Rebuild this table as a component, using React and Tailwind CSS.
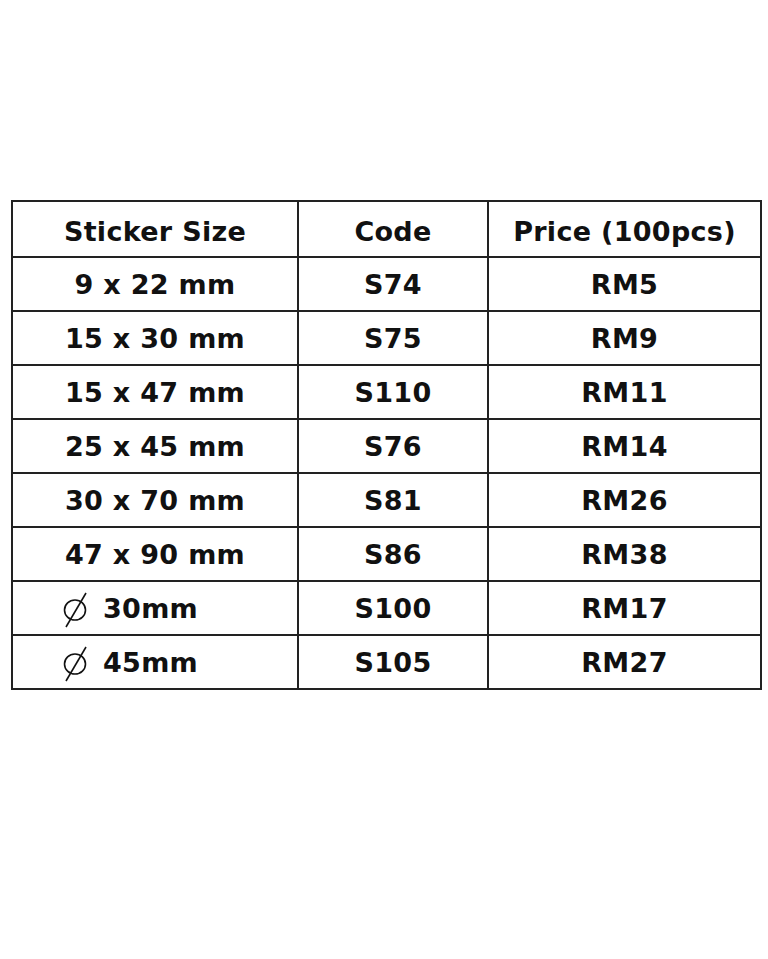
import React from "react";

const rows = [
  { size: "9 x 22 mm", code: "S74", price: "RM5" },
  { size: "15 x 30 mm", code: "S75", price: "RM9" },
  { size: "15 x 47 mm", code: "S110", price: "RM11" },
  { size: "25 x 45 mm", code: "S76", price: "RM14" },
  { size: "30 x 70 mm", code: "S81", price: "RM26" },
  { size: "47 x 90 mm", code: "S86", price: "RM38" },
  { size: "30mm", code: "S100", price: "RM17", round: true },
  { size: "45mm", code: "S105", price: "RM27", round: true },
];

function Diameter() {
  return (
    <svg width="26" height="38" viewBox="0 0 26 38" className="shrink-0">
      <ellipse cx="12" cy="19" rx="10.5" ry="10" fill="none" stroke="#111" strokeWidth="1.6" />
      <line x1="3" y1="36" x2="23" y2="2" stroke="#111" strokeWidth="1.6" />
    </svg>
  );
}

export default function App() {
  return (
    <div
      className="w-[768px] h-[959px] bg-white pt-[200px] pl-[11px]"
      style={{ fontFamily: '"DejaVu Sans", "Liberation Sans", sans-serif' }}
    >
      <table className="border-collapse text-[#111] font-bold text-[27px] tracking-[0.3px]">
        <thead>
          <tr className="h-[56px]">
            <th className="w-[286px] border-2 border-[#222] text-center font-bold pt-[6px]">Sticker Size</th>
            <th className="w-[190px] border-2 border-[#222] text-center font-bold pt-[6px]">Code</th>
            <th className="w-[273px] border-2 border-[#222] text-center font-bold pt-[6px]">Price (100pcs)</th>
          </tr>
        </thead>
        <tbody>
          {rows.map((r) => (
            <tr key={r.code} className="h-[54px]">
              <td className="border-2 border-[#222] text-center pt-[3px]">
                {r.round ? (
                  <div className="flex items-center pl-[50px] gap-[14px]">
                    <Diameter />
                    <span>{r.size}</span>
                  </div>
                ) : (
                  r.size
                )}
              </td>
              <td className="border-2 border-[#222] text-center pt-[3px]">{r.code}</td>
              <td className="border-2 border-[#222] text-center pt-[3px]">{r.price}</td>
            </tr>
          ))}
        </tbody>
      </table>
    </div>
  );
}
